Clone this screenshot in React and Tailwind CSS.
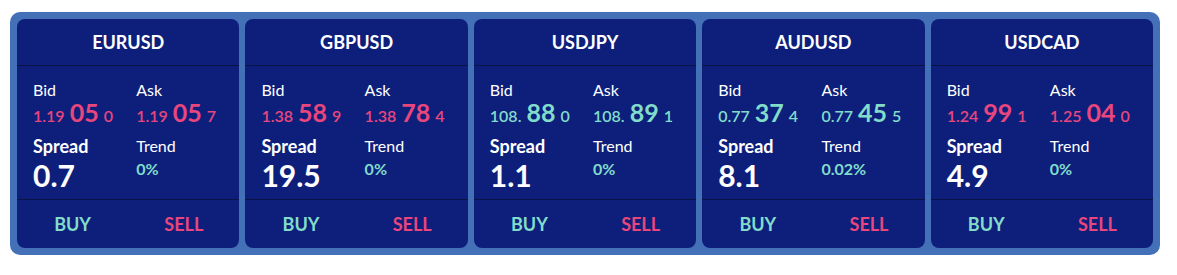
const pairs = [
  { name: 'EURUSD', bid: ['1.19', '05', '0'], ask: ['1.19', '05', '7'], spread: '0.7', trend: '0%', up: false },
  { name: 'GBPUSD', bid: ['1.38', '58', '9'], ask: ['1.38', '78', '4'], spread: '19.5', trend: '0%', up: false },
  { name: 'USDJPY', bid: ['108.', '88', '0'], ask: ['108.', '89', '1'], spread: '1.1', trend: '0%', up: true },
  { name: 'AUDUSD', bid: ['0.77', '37', '4'], ask: ['0.77', '45', '5'], spread: '8.1', trend: '0.02%', up: true },
  { name: 'USDCAD', bid: ['1.24', '99', '1'], ask: ['1.25', '04', '0'], spread: '4.9', trend: '0%', up: false },
];

function Price({ parts, up }) {
  return (
    <div className={`flex items-baseline gap-[5px] h-[26px] leading-[24px] ${up ? 'text-[#82dcca]' : 'text-[#e8467c]'}`}>
      <span className="text-[16px] font-semibold">{parts[0]}</span>
      <span className="text-[25px] font-bold">{parts[1]}</span>
      <span className="text-[16px] font-semibold">{parts[2]}</span>
    </div>
  );
}

function PairCard({ pair }) {
  return (
    <div className="flex-1 flex flex-col rounded-lg bg-[#0d1f7b] text-white">
      {/* Header */}
      <div className="h-[47px] flex items-center justify-center border-b border-[#0a1447] text-[18px] font-bold">
        {pair.name}
      </div>

      {/* Body */}
      <div className="h-[134px] pl-4 pt-[14px] grid grid-cols-2 content-start border-b border-[#0a1447]">
        <div className="flex flex-col">
          <span className="text-[16px] leading-5">Bid</span>
          <Price parts={pair.bid} up={pair.up} />
          <span className="mt-[10px] text-[18px] leading-5 font-bold">Spread</span>
          <span className="mt-[3px] text-[30px] leading-8 font-bold">{pair.spread}</span>
        </div>
        <div className="flex flex-col">
          <span className="text-[16px] leading-5">Ask</span>
          <Price parts={pair.ask} up={pair.up} />
          <span className="mt-[10px] text-[16px] leading-5">Trend</span>
          <span className="mt-[3px] text-[16px] leading-5 font-bold text-[#82dcca]">{pair.trend}</span>
        </div>
      </div>

      {/* Actions */}
      <div className="flex-1 grid grid-cols-2 items-center text-[18px] font-bold">
        <button className="text-center text-[#82dcca]">BUY</button>
        <button className="text-center text-[#e8467c]">SELL</button>
      </div>
    </div>
  );
}

export default function App() {
  return (
    <div className="min-h-screen bg-white" style={{ fontFamily: 'Lato, "Noto Sans", sans-serif' }}>
      <div className="ml-[10px] pt-[12px]">
        <div className="w-[1150px] h-[243px] rounded-[10px] bg-[#4470b8] p-[7px] flex gap-[6px]">
          {pairs.map((p) => (
            <PairCard key={p.name} pair={p} />
          ))}
        </div>
      </div>
    </div>
  );
}
